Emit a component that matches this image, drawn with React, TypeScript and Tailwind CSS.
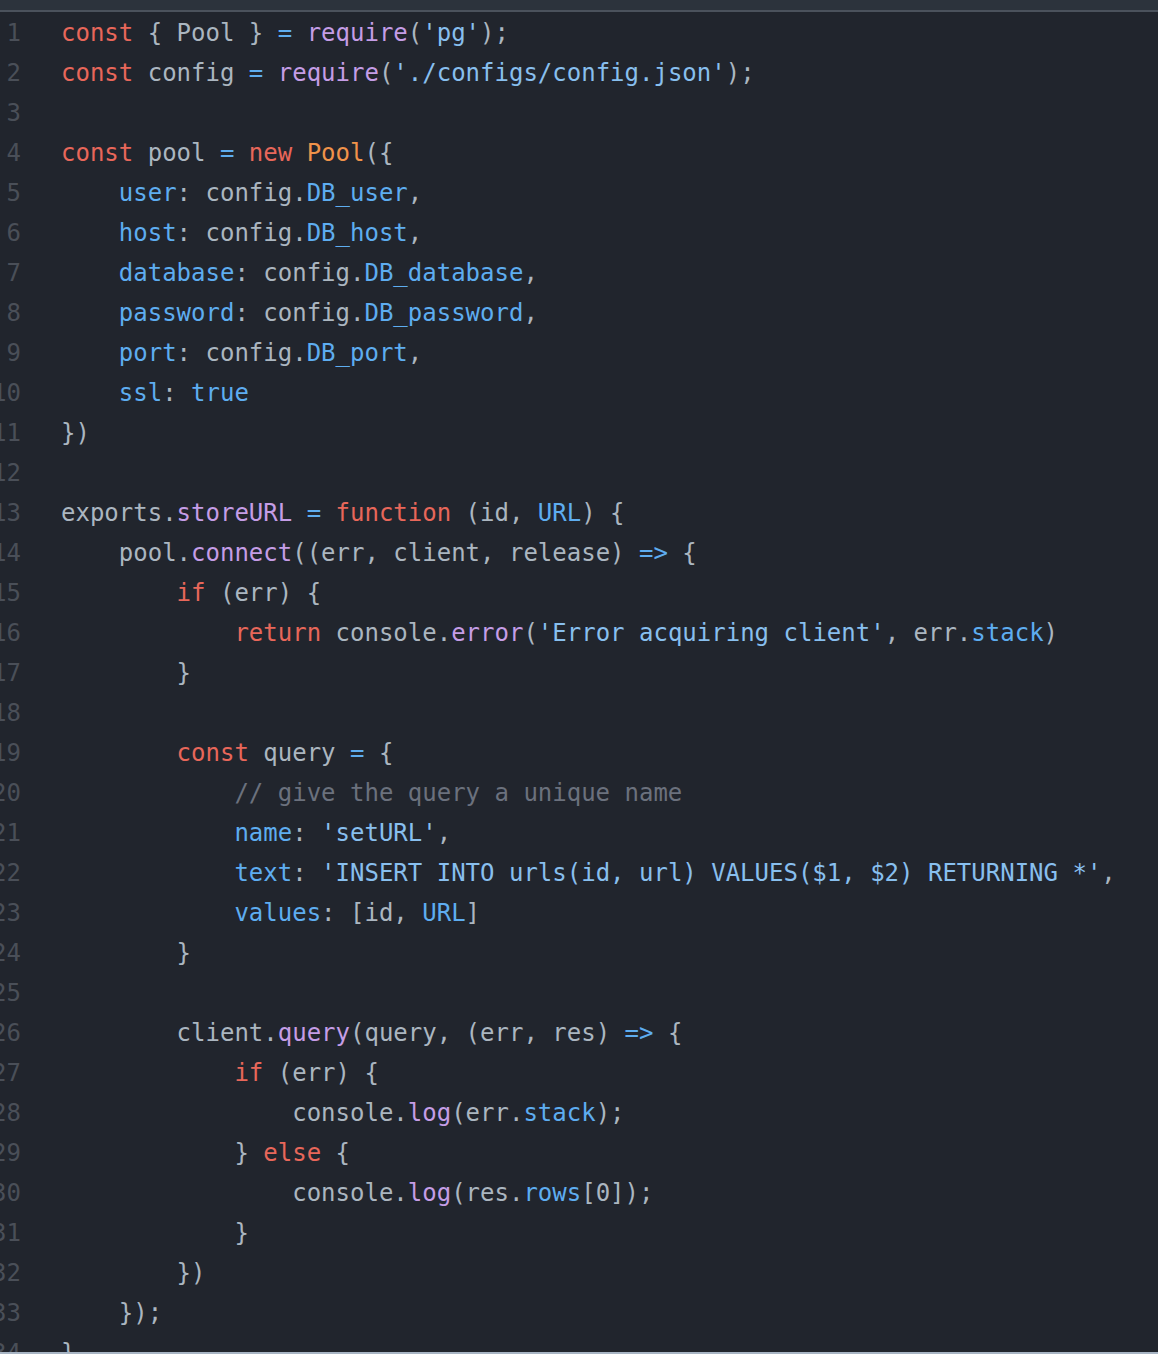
import React from "react";

type Tok = [string, string];

const K = "text-[#e8675a]"; // keyword
const P = "text-[#abb6c0]"; // plain
const B = "text-[#5eadf0]"; // property / operator
const F = "text-[#c59de6]"; // function
const O = "text-[#f0934a]"; // class
const S = "text-[#88bfee]"; // string
const C = "text-[#6b717d]"; // comment

const lines: Tok[][] = [
  [[K, "const"], [P, " { Pool } "], [B, "="], [P, " "], [F, "require"], [P, "("], [S, "'pg'"], [P, ");"]],
  [[K, "const"], [P, " config "], [B, "="], [P, " "], [F, "require"], [P, "("], [S, "'./configs/config.json'"], [P, ");"]],
  [],
  [[K, "const"], [P, " pool "], [B, "="], [P, " "], [K, "new"], [P, " "], [O, "Pool"], [P, "({"]],
  [[P, "    "], [B, "user"], [P, ": config."], [B, "DB_user"], [P, ","]],
  [[P, "    "], [B, "host"], [P, ": config."], [B, "DB_host"], [P, ","]],
  [[P, "    "], [B, "database"], [P, ": config."], [B, "DB_database"], [P, ","]],
  [[P, "    "], [B, "password"], [P, ": config."], [B, "DB_password"], [P, ","]],
  [[P, "    "], [B, "port"], [P, ": config."], [B, "DB_port"], [P, ","]],
  [[P, "    "], [B, "ssl"], [P, ": "], [B, "true"]],
  [[P, "})"]],
  [],
  [[P, "exports."], [F, "storeURL"], [P, " "], [B, "="], [P, " "], [K, "function"], [P, " (id, "], [B, "URL"], [P, ") {"]],
  [[P, "    pool."], [F, "connect"], [P, "((err, client, release) "], [B, "=>"], [P, " {"]],
  [[P, "        "], [K, "if"], [P, " (err) {"]],
  [[P, "            "], [K, "return"], [P, " console."], [F, "error"], [P, "("], [S, "'Error acquiring client'"], [P, ", err."], [B, "stack"], [P, ")"]],
  [[P, "        }"]],
  [],
  [[P, "        "], [K, "const"], [P, " query "], [B, "="], [P, " {"]],
  [[P, "            "], [C, "// give the query a unique name"]],
  [[P, "            "], [B, "name"], [P, ": "], [S, "'setURL'"], [P, ","]],
  [[P, "            "], [B, "text"], [P, ": "], [S, "'INSERT INTO urls(id, url) VALUES($1, $2) RETURNING *'"], [P, ","]],
  [[P, "            "], [B, "values"], [P, ": [id, "], [B, "URL"], [P, "]"]],
  [[P, "        }"]],
  [],
  [[P, "        client."], [F, "query"], [P, "(query, (err, res) "], [B, "=>"], [P, " {"]],
  [[P, "            "], [K, "if"], [P, " (err) {"]],
  [[P, "                console."], [F, "log"], [P, "(err."], [B, "stack"], [P, ");"]],
  [[P, "            } "], [K, "else"], [P, " {"]],
  [[P, "                console."], [F, "log"], [P, "(res."], [B, "rows"], [P, "[0]);"]],
  [[P, "            }"]],
  [[P, "        })"]],
  [[P, "    });"]],
  [[P, "}"]],
];

export default function App() {
  return (
    <div
      className="w-[1158px] h-[1354px] flex flex-col overflow-hidden bg-[#21252d]"
      style={{ fontFamily: '"DejaVu Sans Mono", "Liberation Mono", monospace' }}
    >
      <div className="h-[10px] shrink-0 bg-[#2c333c]" />
      <div className="h-[2px] shrink-0 bg-[#4b525c]" />
      <div className="flex-1 overflow-hidden pt-[1px]">
        {lines.map((toks, i) => (
          <div key={i} className="flex h-[40px] items-center text-[24px] leading-[40px]">
            <div className="w-[21px] shrink-0 flex justify-end">
              <span className="shrink-0 whitespace-pre text-[#4a4f58]">{i + 1}</span>
            </div>
            <div className="ml-[40px] whitespace-pre">
              {toks.map(([c, t], j) => (
                <span key={j} className={c}>
                  {t}
                </span>
              ))}
            </div>
          </div>
        ))}
      </div>
      <div className="h-[2px] shrink-0 bg-[#a8b5c4]" />
    </div>
  );
}
